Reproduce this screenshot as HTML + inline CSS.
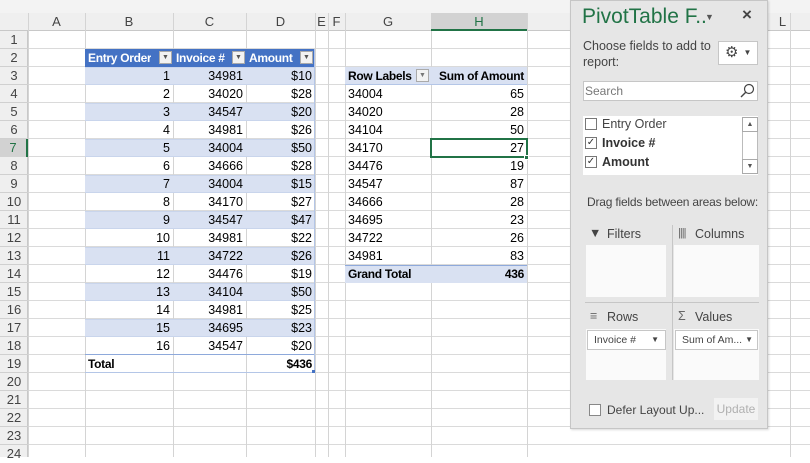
<!DOCTYPE html>
<html><head><meta charset="utf-8"><style>
*{margin:0;padding:0;box-sizing:border-box}
body{width:810px;height:457px;overflow:hidden;background:#fff;font-family:"Liberation Sans",sans-serif;font-size:13px;color:#000;position:relative}
.a{position:absolute}
.c{position:absolute;height:18px;line-height:18px;white-space:nowrap;overflow:hidden;font-size:12.5px}
.c b,.bd{font-weight:bold;font-size:12px;letter-spacing:-0.3px}
.r{text-align:right;padding-right:3px}
.l{padding-left:3px}
.vl{position:absolute;top:13px;width:1px;height:444px;background:#d4d4d4}
.hdr{position:absolute;top:13px;height:18px;line-height:18px;text-align:center;color:#444;font-size:13px}
.rn{position:absolute;left:0;width:28px;height:18px;line-height:18px;text-align:center;color:#444;font-size:13px}
.band{position:absolute;left:85px;width:230px;height:18px;background:#d9e1f2;border-top:1px solid #c9d5ec;border-bottom:1px solid #c9d5ec}
.dd{position:absolute;width:13px;height:13px;background:#f2f2f2;border:1px solid #aaa;font-size:7px;text-align:center;line-height:11px;color:#555}
</style></head><body>
<div class="a" style="left:0;top:0;width:810px;height:13px;background:#f3f3f3"></div>
<div class="a" style="left:0;top:13px;width:810px;height:18px;background:#efefef;border-bottom:1px solid #c8c8c8"></div>
<div class="a" style="left:0;top:31px;width:28px;height:426px;background:#efefef;border-right:1px solid #c8c8c8"></div>
<div class="a" style="left:28px;top:31px;width:782px;height:426px;background:repeating-linear-gradient(to bottom,transparent 0,transparent 17px,#dadada 17px,#dadada 18px)"></div>
<div class="a" style="left:0;top:31px;width:28px;height:426px;background:repeating-linear-gradient(to bottom,transparent 0,transparent 17px,#d0d0d0 17px,#d0d0d0 18px)"></div>
<div class="vl" style="left:28px"></div><div class="vl" style="left:85px"></div><div class="vl" style="left:173px"></div><div class="vl" style="left:246px"></div><div class="vl" style="left:315px"></div><div class="vl" style="left:328px"></div><div class="vl" style="left:345px"></div><div class="vl" style="left:431px"></div><div class="vl" style="left:527px"></div><div class="vl" style="left:790px"></div>
<div class="hdr" style="left:28px;width:57px">A</div><div class="hdr" style="left:85px;width:88px">B</div><div class="hdr" style="left:173px;width:73px">C</div><div class="hdr" style="left:246px;width:69px">D</div><div class="hdr" style="left:315px;width:13px">E</div><div class="hdr" style="left:328px;width:17px">F</div><div class="hdr" style="left:345px;width:86px">G</div>
<div class="hdr" style="left:431px;width:96px;background:#d2d2d2;border-bottom:2px solid #217346;color:#217346">H</div>
<div class="hdr" style="left:775px;width:15px">L</div>
<div class="rn" style="top:31px">1</div><div class="rn" style="top:49px">2</div><div class="rn" style="top:67px">3</div><div class="rn" style="top:85px">4</div><div class="rn" style="top:103px">5</div><div class="rn" style="top:121px">6</div><div class="rn" style="top:139px;background:#d2d2d2;color:#217346;border-right:2px solid #217346">7</div><div class="rn" style="top:157px">8</div><div class="rn" style="top:175px">9</div><div class="rn" style="top:193px">10</div><div class="rn" style="top:211px">11</div><div class="rn" style="top:229px">12</div><div class="rn" style="top:247px">13</div><div class="rn" style="top:265px">14</div><div class="rn" style="top:283px">15</div><div class="rn" style="top:301px">16</div><div class="rn" style="top:319px">17</div><div class="rn" style="top:337px">18</div><div class="rn" style="top:355px">19</div><div class="rn" style="top:373px">20</div><div class="rn" style="top:391px">21</div><div class="rn" style="top:409px">22</div><div class="rn" style="top:427px">23</div><div class="rn" style="top:445px">24</div>
<div class="a" style="left:85px;top:49px;width:230px;height:18px;background:#4472c4"></div>
<div class="c l bd" style="left:85px;top:49px;color:#fff">Entry Order</div>
<div class="c l bd" style="left:173px;top:49px;color:#fff">Invoice #</div>
<div class="c l bd" style="left:246px;top:49px;color:#fff">Amount</div>
<div class="dd" style="left:159px;top:51px">▼</div><div class="dd" style="left:232px;top:51px">▼</div><div class="dd" style="left:300px;top:51px">▼</div>
<div class="band" style="top:67px"></div><div class="band" style="top:103px"></div><div class="band" style="top:139px"></div><div class="band" style="top:175px"></div><div class="band" style="top:211px"></div><div class="band" style="top:247px"></div><div class="band" style="top:283px"></div><div class="band" style="top:319px"></div>
<div class="a" style="left:85px;top:354px;width:230px;height:1px;background:#8ea9db"></div>
<div class="a" style="left:85px;top:372px;width:230px;height:1px;background:#b4c6e7"></div>
<div class="a" style="left:314px;top:49px;width:1px;height:324px;background:#b4c6e7"></div>
<div class="c r" style="left:85px;width:88px;top:67px">1</div><div class="c r" style="left:173px;width:73px;top:67px">34981</div><div class="c r" style="left:246px;width:69px;top:67px">$10</div>
<div class="c r" style="left:85px;width:88px;top:85px">2</div><div class="c r" style="left:173px;width:73px;top:85px">34020</div><div class="c r" style="left:246px;width:69px;top:85px">$28</div>
<div class="c r" style="left:85px;width:88px;top:103px">3</div><div class="c r" style="left:173px;width:73px;top:103px">34547</div><div class="c r" style="left:246px;width:69px;top:103px">$20</div>
<div class="c r" style="left:85px;width:88px;top:121px">4</div><div class="c r" style="left:173px;width:73px;top:121px">34981</div><div class="c r" style="left:246px;width:69px;top:121px">$26</div>
<div class="c r" style="left:85px;width:88px;top:139px">5</div><div class="c r" style="left:173px;width:73px;top:139px">34004</div><div class="c r" style="left:246px;width:69px;top:139px">$50</div>
<div class="c r" style="left:85px;width:88px;top:157px">6</div><div class="c r" style="left:173px;width:73px;top:157px">34666</div><div class="c r" style="left:246px;width:69px;top:157px">$28</div>
<div class="c r" style="left:85px;width:88px;top:175px">7</div><div class="c r" style="left:173px;width:73px;top:175px">34004</div><div class="c r" style="left:246px;width:69px;top:175px">$15</div>
<div class="c r" style="left:85px;width:88px;top:193px">8</div><div class="c r" style="left:173px;width:73px;top:193px">34170</div><div class="c r" style="left:246px;width:69px;top:193px">$27</div>
<div class="c r" style="left:85px;width:88px;top:211px">9</div><div class="c r" style="left:173px;width:73px;top:211px">34547</div><div class="c r" style="left:246px;width:69px;top:211px">$47</div>
<div class="c r" style="left:85px;width:88px;top:229px">10</div><div class="c r" style="left:173px;width:73px;top:229px">34981</div><div class="c r" style="left:246px;width:69px;top:229px">$22</div>
<div class="c r" style="left:85px;width:88px;top:247px">11</div><div class="c r" style="left:173px;width:73px;top:247px">34722</div><div class="c r" style="left:246px;width:69px;top:247px">$26</div>
<div class="c r" style="left:85px;width:88px;top:265px">12</div><div class="c r" style="left:173px;width:73px;top:265px">34476</div><div class="c r" style="left:246px;width:69px;top:265px">$19</div>
<div class="c r" style="left:85px;width:88px;top:283px">13</div><div class="c r" style="left:173px;width:73px;top:283px">34104</div><div class="c r" style="left:246px;width:69px;top:283px">$50</div>
<div class="c r" style="left:85px;width:88px;top:301px">14</div><div class="c r" style="left:173px;width:73px;top:301px">34981</div><div class="c r" style="left:246px;width:69px;top:301px">$25</div>
<div class="c r" style="left:85px;width:88px;top:319px">15</div><div class="c r" style="left:173px;width:73px;top:319px">34695</div><div class="c r" style="left:246px;width:69px;top:319px">$23</div>
<div class="c r" style="left:85px;width:88px;top:337px">16</div><div class="c r" style="left:173px;width:73px;top:337px">34547</div><div class="c r" style="left:246px;width:69px;top:337px">$20</div>
<div class="c l bd" style="left:85px;top:355px">Total</div><div class="c r bd" style="left:246px;width:69px;top:355px">$436</div>
<div class="a" style="left:312px;top:370px;width:3px;height:3px;background:#4472c4"></div>
<div class="a" style="left:345px;top:67px;width:182px;height:18px;background:#d9e1f2;border-bottom:1px solid #b4c6e7"></div>
<div class="c l bd" style="left:345px;top:67px">Row Labels</div>
<div class="dd" style="left:416px;top:69px;color:#777">▼</div>
<div class="c r bd" style="left:431px;width:96px;top:67px">Sum of Amount</div>
<div class="c l" style="left:345px;top:85px">34004</div><div class="c r" style="left:431px;width:96px;top:85px">65</div>
<div class="c l" style="left:345px;top:103px">34020</div><div class="c r" style="left:431px;width:96px;top:103px">28</div>
<div class="c l" style="left:345px;top:121px">34104</div><div class="c r" style="left:431px;width:96px;top:121px">50</div>
<div class="c l" style="left:345px;top:139px">34170</div><div class="c r" style="left:431px;width:96px;top:139px">27</div>
<div class="c l" style="left:345px;top:157px">34476</div><div class="c r" style="left:431px;width:96px;top:157px">19</div>
<div class="c l" style="left:345px;top:175px">34547</div><div class="c r" style="left:431px;width:96px;top:175px">87</div>
<div class="c l" style="left:345px;top:193px">34666</div><div class="c r" style="left:431px;width:96px;top:193px">28</div>
<div class="c l" style="left:345px;top:211px">34695</div><div class="c r" style="left:431px;width:96px;top:211px">23</div>
<div class="c l" style="left:345px;top:229px">34722</div><div class="c r" style="left:431px;width:96px;top:229px">26</div>
<div class="c l" style="left:345px;top:247px">34981</div><div class="c r" style="left:431px;width:96px;top:247px">83</div>
<div class="a" style="left:345px;top:265px;width:182px;height:18px;background:#d9e1f2;border-top:1px solid #8ea9db"></div>
<div class="c l bd" style="left:345px;top:265px">Grand Total</div><div class="c r bd" style="left:431px;width:96px;top:265px">436</div>
<div class="a" style="left:430px;top:138px;width:98px;height:20px;border:2px solid #217346"></div>
<div class="a" style="left:524px;top:155px;width:5px;height:5px;background:#217346;border:1px solid #fff"></div>
<div class="a" style="left:570px;top:0;width:198px;height:429px;background:#e6e6e6;border:1px solid #c6c6c6;box-shadow:1px 1px 2px rgba(0,0,0,.15)">
<div class="a" style="left:11px;top:2px;font-size:21px;color:#217346;line-height:28px">PivotTable F..</div>
<div class="a" style="left:134px;top:11px;font-size:9px;color:#555">▼</div>
<div class="a" style="left:171px;top:4px;font-size:17px;color:#444;font-weight:bold">×</div>
<div class="a" style="left:12px;top:37px;font-size:12.5px;color:#444;line-height:16px">Choose fields to add to<br>report:</div>
<div class="a" style="left:147px;top:40px;width:40px;height:24px;background:#fff;border:1px solid #c6c6c6;font-size:15px;color:#444;line-height:22px;padding-left:6px">⚙<span style="font-size:8px;margin-left:5px;vertical-align:2px">▼</span></div>
<div class="a" style="left:12px;top:80px;width:175px;height:20px;background:#fff;border:1px solid #c6c6c6;color:#777;font-size:12px;line-height:18px;padding-left:1px">Search
<svg class="a" style="right:2px;top:1px" width="16" height="16" viewBox="0 0 16 16"><circle cx="10" cy="6" r="4.5" fill="none" stroke="#444" stroke-width="1.2"/><path d="M7 9L2 14" stroke="#444" stroke-width="1.4"/></svg></div>
<div class="a" style="left:12px;top:115px;width:175px;height:59px;background:#fff"></div>
<div class="a" style="left:14px;top:117px;width:12px;height:12px;background:#fff;border:1px solid #777"></div>
<div class="a" style="left:31px;top:116px;color:#444;font-size:12.5px">Entry Order</div>
<div class="a" style="left:14px;top:136px;width:12px;height:12px;background:#fff;border:1px solid #777;font-size:10px;line-height:10px;text-align:center;color:#333">✓</div>
<div class="a" style="left:31px;top:135px;color:#333;font-size:12.5px;font-weight:bold">Invoice #</div>
<div class="a" style="left:14px;top:155px;width:12px;height:12px;background:#fff;border:1px solid #777;font-size:10px;line-height:10px;text-align:center;color:#333">✓</div>
<div class="a" style="left:31px;top:154px;color:#333;font-size:12.5px;font-weight:bold">Amount</div>
<div class="a" style="left:171px;top:116px;width:16px;height:57px;background:#fff;border:1px solid #bbb"></div>
<div class="a" style="left:171px;top:116px;width:16px;height:15px;border:1px solid #aaa;font-size:7px;text-align:center;line-height:13px;color:#555">▲</div>
<div class="a" style="left:171px;top:158px;width:16px;height:15px;border:1px solid #aaa;font-size:7px;text-align:center;line-height:13px;color:#555">▼</div>
<div class="a" style="left:16px;top:194px;color:#444;font-size:12px;white-space:nowrap;letter-spacing:-0.2px">Drag fields between areas below:</div>
<div class="a" style="left:101px;top:224px;width:1px;height:155px;background:#c6c6c6"></div>
<div class="a" style="left:14px;top:301px;width:174px;height:1px;background:#c6c6c6"></div>
<div class="a" style="left:18px;top:225px;font-size:12.5px;color:#444">▼</div>
<div class="a" style="left:36px;top:226px;font-size:12.5px;color:#444">Filters</div>
<div class="a" style="left:107px;top:226px;font-size:11px;color:#666;letter-spacing:-1px">||||</div>
<div class="a" style="left:124px;top:226px;font-size:12.5px;color:#444">Columns</div>
<div class="a" style="left:15px;top:244px;width:80px;height:52px;background:#fafafa"></div>
<div class="a" style="left:103px;top:244px;width:85px;height:52px;background:#fafafa"></div>
<div class="a" style="left:19px;top:308px;font-size:12.5px;color:#666">≡</div>
<div class="a" style="left:36px;top:309px;font-size:12.5px;color:#444">Rows</div>
<div class="a" style="left:107px;top:308px;font-size:12.5px;color:#666">Σ</div>
<div class="a" style="left:124px;top:309px;font-size:12.5px;color:#444">Values</div>
<div class="a" style="left:15px;top:328px;width:80px;height:51px;background:#fafafa"></div>
<div class="a" style="left:103px;top:328px;width:85px;height:51px;background:#fafafa"></div>
<div class="a" style="left:16px;top:329px;width:79px;height:20px;background:#fff;border:1px solid #c6c6c6;font-size:10.5px;color:#444;line-height:18px;padding-left:6px">Invoice #<span class="a" style="right:6px;font-size:8px">▼</span></div>
<div class="a" style="left:104px;top:329px;width:83px;height:20px;background:#fff;border:1px solid #c6c6c6;font-size:10.5px;color:#444;line-height:18px;padding-left:6px">Sum of Am...<span class="a" style="right:4px;font-size:8px">▼</span></div>
<div class="a" style="left:18px;top:403px;width:12px;height:12px;background:#fff;border:1px solid #888"></div>
<div class="a" style="left:36px;top:402px;font-size:12px;color:#444">Defer Layout Up...</div>
<div class="a" style="left:143px;top:397px;width:44px;height:22px;background:#f2f2f2;color:#b0b0b0;font-size:12px;line-height:22px;text-align:center">Update</div>
</div>
</body></html>
